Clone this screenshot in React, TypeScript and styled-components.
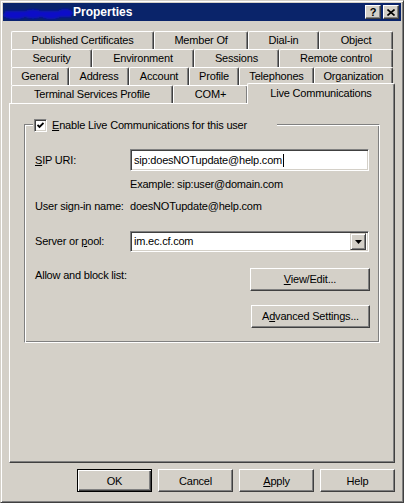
import React from 'react';
import styled, { createGlobalStyle } from 'styled-components';

const GlobalStyle = createGlobalStyle`
  html, body {
    margin: 0;
    padding: 0;
    background: #d4d0c8;
  }
  body {
    font-family: "Liberation Sans", Arial, sans-serif;
    font-size: 11px;
    letter-spacing: -0.2px;
    color: #000;
  }
  * {
    box-sizing: border-box;
  }
  u {
    text-decoration-thickness: 1px;
    text-underline-offset: 1px;
  }
`;

const Window = styled.div`
  width: 404px;
  height: 503px;
  background: #d4d0c8;
  border: 1px solid;
  border-color: #d4d0c8 #404040 #404040 #d4d0c8;
  box-shadow: inset 1px 1px #fff, inset -1px -1px #808080;
  padding: 2px;
  display: flex;
  flex-direction: column;
`;

const TitleBar = styled.div`
  height: 18px;
  flex: none;
  background: #0a246a;
  display: flex;
  align-items: center;
  padding-right: 2px;
`;

const Redacted = styled.svg`
  display: block;
  flex: none;
`;

const TitleText = styled.span`
  flex: 1;
  color: #fff;
  font-weight: bold;
  font-size: 12px;
  letter-spacing: 0;
`;

const CaptionButtons = styled.div`
  display: flex;
  gap: 2px;
`;

const CaptionButton = styled.div`
  width: 16px;
  height: 14px;
  background: #d4d0c8;
  border: 1px solid;
  border-color: #fff #404040 #404040 #fff;
  box-shadow: inset -1px -1px #808080;
  display: flex;
  align-items: center;
  justify-content: center;
  font-weight: bold;
  font-size: 11px;
  line-height: 1;
`;

const Body = styled.div`
  flex: 1;
  display: flex;
  flex-direction: column;
  padding: 10px 6px 0 6px;
`;

const TabStrip = styled.div`
  display: flex;
  flex-direction: column;
  padding-left: 2px;
`;

const TabRow = styled.div`
  display: flex;
  height: 18px;
  width: 382px;
`;

const Tab = styled.div<{ $w: number; $selected?: boolean }>`
  flex: none;
  width: ${(p) => (p.$selected ? p.$w + 3 : p.$w)}px;
  height: ${(p) => (p.$selected ? 21 : 18)}px;
  margin: ${(p) => (p.$selected ? '-2px -2px 0 -1px' : '0')};
  background: #d4d0c8;
  border-top: 1px solid #fff;
  border-left: 1px solid #fff;
  border-right: 1px solid #404040;
  border-radius: 2px 2px 0 0;
  box-shadow: inset -1px 0 #808080;
  display: flex;
  align-items: center;
  justify-content: center;
  padding-bottom: ${(p) => (p.$selected ? 3 : 1)}px;
  white-space: nowrap;
  position: ${(p) => (p.$selected ? 'relative' : 'static')};
  z-index: ${(p) => (p.$selected ? 1 : 'auto')};
`;

const Panel = styled.div`
  width: 386px;
  height: 360px;
  flex: none;
  border: 1px solid;
  border-color: #fff #404040 #404040 #fff;
  box-shadow: inset -1px -1px #808080;
  padding: 20px 0 0 14px;
`;

const Group = styled.div`
  position: relative;
  width: 356px;
  height: 219px;
  border: 1px solid;
  border-color: #808080 #fff #fff #808080;
  box-shadow: inset 1px 1px #fff, inset -1px -1px #808080;
  padding: 24px 9px 0 10px;
`;

const Legend = styled.div`
  position: absolute;
  top: -7px;
  left: 8px;
  width: 244px;
  height: 14px;
  background: #d4d0c8;
  display: flex;
  align-items: center;
  padding-left: 1px;
  gap: 5px;
  white-space: nowrap;
`;

const CheckBox = styled.div`
  width: 13px;
  height: 13px;
  flex: none;
  background: #fff;
  border: 1px solid;
  border-color: #808080 #fff #fff #808080;
  box-shadow: inset 1px 1px #404040, inset -1px -1px #d4d0c8;
  display: flex;
  align-items: center;
  justify-content: center;
`;

const FieldRow = styled.div<{ $mt: number; $top?: boolean }>`
  display: flex;
  align-items: ${(p) => (p.$top ? 'flex-start' : 'center')};
  margin-top: ${(p) => p.$mt}px;
  line-height: 13px;
  white-space: nowrap;
`;

const Label = styled.div<{ $offset?: number }>`
  width: 95px;
  flex: none;
  padding-top: ${(p) => p.$offset ?? 0}px;
`;

const Sunken = styled.div<{ $h: number }>`
  width: 239px;
  height: ${(p) => p.$h}px;
  background: #fff;
  border: 1px solid;
  border-color: #808080 #fff #fff #808080;
  box-shadow: inset 1px 1px #404040, inset -1px -1px #d4d0c8;
  display: flex;
  align-items: center;
  padding: 0 2px 0 3px;
`;

const Caret = styled.span`
  display: inline-block;
  width: 1px;
  height: 13px;
  background: #000;
  margin-left: 1px;
`;

const ComboText = styled.span`
  flex: 1;
`;

const ComboButton = styled.div`
  width: 16px;
  height: 17px;
  background: #d4d0c8;
  border: 1px solid;
  border-color: #d4d0c8 #404040 #404040 #d4d0c8;
  box-shadow: inset 1px 1px #fff, inset -1px -1px #808080;
  display: flex;
  align-items: center;
  justify-content: center;
`;

const Button = styled.div<{ $w: number; $default?: boolean; $right?: boolean }>`
  width: ${(p) => p.$w}px;
  height: 23px;
  flex: none;
  margin-left: ${(p) => (p.$right ? 'auto' : '0')};
  background: #d4d0c8;
  border: 1px solid;
  border-color: ${(p) => (p.$default ? '#000' : '#fff #404040 #404040 #fff')};
  box-shadow: ${(p) =>
    p.$default
      ? 'inset 1px 1px #fff, inset -1px -1px #404040, inset -2px -2px #808080'
      : 'inset -1px -1px #808080'};
  display: flex;
  align-items: center;
  justify-content: center;
  white-space: nowrap;
`;

const ButtonBar = styled.div`
  display: flex;
  justify-content: flex-end;
  gap: 6px;
  padding-top: 6px;
`;

const tabRows: { label: string; w: number }[][] = [
  [
    { label: 'Published Certificates', w: 143 },
    { label: 'Member Of', w: 94 },
    { label: 'Dial-in', w: 71 },
    { label: 'Object', w: 74 },
  ],
  [
    { label: 'Security', w: 81 },
    { label: 'Environment', w: 102 },
    { label: 'Sessions', w: 85 },
    { label: 'Remote control', w: 114 },
  ],
  [
    { label: 'General', w: 58 },
    { label: 'Address', w: 60 },
    { label: 'Account', w: 60 },
    { label: 'Profile', w: 50 },
    { label: 'Telephones', w: 75 },
    { label: 'Organization', w: 79 },
  ],
];

const App = () => (
  <>
    <GlobalStyle />
    <Window>
      <TitleBar>
        <Redacted width="70" height="18" viewBox="0 0 70 18">
          <defs>
            <filter id="smudge" x="-10%" y="-50%" width="120%" height="200%">
              <feGaussianBlur stdDeviation="1.2" />
            </filter>
          </defs>
          <g filter="url(#smudge)" fill="#0a10c8">
            <ellipse cx="12" cy="12" rx="12" ry="4" />
            <ellipse cx="30" cy="11" rx="10" ry="4.5" />
            <ellipse cx="48" cy="12" rx="11" ry="4" />
            <ellipse cx="62" cy="10" rx="8" ry="4" />
            <rect x="2" y="8" width="66" height="6" />
          </g>
        </Redacted>
        <TitleText>Properties</TitleText>
        <CaptionButtons>
          <CaptionButton>?</CaptionButton>
          <CaptionButton>
            <svg width="8" height="7" viewBox="0 0 8 7">
              <path d="M0.5 0.5 L7.5 6.5 M7.5 0.5 L0.5 6.5" stroke="#000" strokeWidth="1.6" />
            </svg>
          </CaptionButton>
        </CaptionButtons>
      </TitleBar>

      <Body>
        <TabStrip>
          {tabRows.map((row, i) => (
            <TabRow key={i}>
              {row.map((t) => (
                <Tab key={t.label} $w={t.w}>
                  {t.label}
                </Tab>
              ))}
            </TabRow>
          ))}
          <TabRow>
            <Tab $w={162}>Terminal Services Profile</Tab>
            <Tab $w={75}>COM+</Tab>
            <Tab $w={145} $selected>
              Live Communications
            </Tab>
          </TabRow>
        </TabStrip>

        <Panel>
          <Group>
            <Legend>
              <CheckBox>
                <svg width="7" height="7" viewBox="0 0 7 7">
                  <path d="M0.5 3 L2.5 5 L6.5 1" fill="none" stroke="#000" strokeWidth="1.8" />
                </svg>
              </CheckBox>
              <span>
                <u>E</u>nable Live Communications for this user
              </span>
            </Legend>

            <FieldRow $mt={0}>
              <Label>
                <u>S</u>IP URI:
              </Label>
              <Sunken $h={22}>
                sip:doesNOTupdate@help.com
                <Caret />
              </Sunken>
            </FieldRow>

            <FieldRow $mt={7}>
              <Label />
              <span>Example: sip:user@domain.com</span>
            </FieldRow>

            <FieldRow $mt={9}>
              <Label>User sign-in name:</Label>
              <span>doesNOTupdate@help.com</span>
            </FieldRow>

            <FieldRow $mt={18}>
              <Label>
                Server or <u>p</u>ool:
              </Label>
              <Sunken $h={21}>
                <ComboText>im.ec.cf.com</ComboText>
                <ComboButton>
                  <svg width="7" height="4" viewBox="0 0 7 4">
                    <polygon points="0,0 7,0 3.5,4" fill="#000" />
                  </svg>
                </ComboButton>
              </Sunken>
            </FieldRow>

            <FieldRow $mt={16} $top>
              <Label $offset={1}>Allow and block list:</Label>
              <Button $w={120} $right>
                <span>
                  <u>V</u>iew/Edit...
                </span>
              </Button>
            </FieldRow>

            <FieldRow $mt={14}>
              <Button $w={119} $right>
                <span>
                  A<u>d</u>vanced Settings...
                </span>
              </Button>
            </FieldRow>
          </Group>
        </Panel>

        <ButtonBar>
          <Button $w={75} $default>
            OK
          </Button>
          <Button $w={75}>Cancel</Button>
          <Button $w={75}>
            <span>
              <u>A</u>pply
            </span>
          </Button>
          <Button $w={75}>Help</Button>
        </ButtonBar>
      </Body>
    </Window>
  </>
);

export default App;
